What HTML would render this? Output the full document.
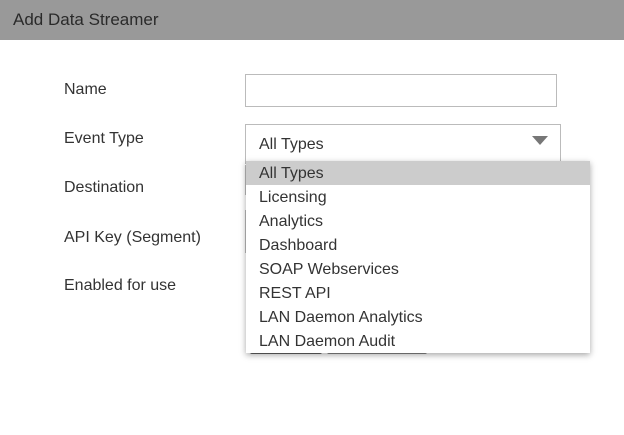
<!DOCTYPE html>
<html><head><style>
body{margin:0;width:624px;height:435px;background:#fff;font-family:"Liberation Sans",sans-serif;color:#333;position:relative;overflow:hidden}
.hdr{position:absolute;left:0;top:0;width:624px;height:40px;background:#999;}
.hdr span{position:absolute;left:13px;top:10px;font-size:17px;color:#2a2a2a}
.lbl{position:absolute;left:64px;font-size:16px;color:#333}
.box{position:absolute;border:1px solid #bbb;background:#fff;box-sizing:border-box}
.dd{position:absolute;left:246px;top:161px;width:344px;height:192px;background:#fff;box-shadow:0 2px 6px rgba(0,0,0,.35)}
.dd div{height:24px;line-height:25px;padding-left:13px;font-size:16px;color:#333}
.dd .sel{background:#ccc}
</style></head><body>
<div class="hdr"><span>Add Data Streamer</span></div>
<div class="lbl" style="top:81px">Name</div>
<div class="lbl" style="top:130px">Event Type</div>
<div class="lbl" style="top:179px">Destination</div>
<div class="lbl" style="top:229px">API Key (Segment)</div>
<div class="lbl" style="top:277px">Enabled for use</div>
<div class="box" style="left:245px;top:74px;width:312px;height:33px"></div>
<div class="box" style="left:245px;top:124px;width:316px;height:40px"><span style="position:absolute;left:13px;top:11px;font-size:16px">All Types</span>
<svg style="position:absolute;left:286px;top:11px" width="16" height="10"><path d="M0 0H16L8 9Z" fill="#777"/></svg></div>
<div class="box" style="left:245px;top:165px;width:316px;height:30px"></div>
<div class="box" style="left:245px;top:210px;width:316px;height:43px"></div>
<div style="position:absolute;left:250px;top:340px;width:72px;height:14px;background:#666;border-radius:2px"></div>
<div style="position:absolute;left:327px;top:340px;width:100px;height:14px;background:#888;border-radius:2px"></div>
<div class="dd">
<div class="sel">All Types</div><div>Licensing</div><div>Analytics</div><div>Dashboard</div><div>SOAP Webservices</div><div>REST API</div><div>LAN Daemon Analytics</div><div>LAN Daemon Audit</div>
</div>
</body></html>
